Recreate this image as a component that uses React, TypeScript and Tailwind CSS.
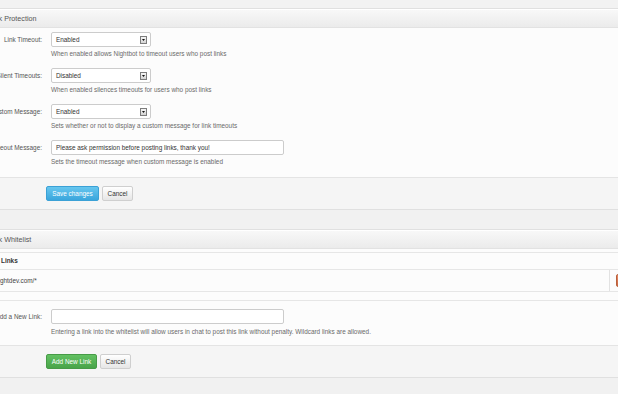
import type { ReactNode } from "react";

function Select({ value }: { value: string }) {
  return (
    <div className="flex h-[15px] w-[100px] items-center justify-between rounded-[2px] border border-[#cccccc] bg-white pl-[4px] pr-[3px] text-[#333]">
      <span>{value}</span>
      <span className="flex h-[8px] w-[7px] items-center justify-center border border-[#7d7d7d] bg-gradient-to-b from-[#f6f6f6] to-[#d4d4d4]">
        <svg width="3" height="2" viewBox="0 0 3 2">
          <path d="M0 0h3L1.5 2z" fill="#111" />
        </svg>
      </span>
    </div>
  );
}

function TextInput({ value = "" }: { value?: string }) {
  return (
    <div className="flex h-[15px] w-[233px] items-center rounded-[2px] border border-[#cccccc] bg-white px-[4px] text-[#333]">
      {value}
    </div>
  );
}

function Field({
  label,
  help,
  helpGap = "mt-[3px]",
  children,
}: {
  label: string;
  help: string;
  helpGap?: string;
  children: ReactNode;
}) {
  return (
    <div className="flex">
      <div className="flex h-[15px] w-[122px] shrink-0 items-center justify-end whitespace-nowrap text-[#555]">
        {label}
      </div>
      <div className="ml-[9px]">
        {children}
        <p className={`${helpGap} h-[8px] whitespace-nowrap leading-[8px] text-[#6a6a6a]`}>{help}</p>
      </div>
    </div>
  );
}

function PanelHeader({ title }: { title: string }) {
  return (
    <div className="flex h-[19px] items-center border-t border-b border-t-white border-b-[#e2e2e2] bg-gradient-to-b from-[#f8f8f8] to-[#ebebeb] pt-[1px] pl-[69px] text-[7.2px] text-[#555]">
      {title}
    </div>
  );
}

function Actions({ children }: { children: ReactNode }) {
  return (
    <div className="flex h-[32px] items-center border-t border-[#e4e4e4] bg-[#f5f5f5] pl-[126px]">
      {children}
    </div>
  );
}

function CancelButton() {
  return (
    <button className="ml-[3px] h-[15px] w-[31px] rounded-[2px] border border-[#cfcfcf] bg-gradient-to-b from-white to-[#e6e6e6] text-[#333]">
      Cancel
    </button>
  );
}

export default function App() {
  return (
    <div className="h-[394px] w-[618px] overflow-hidden bg-[#f1f1f1] font-['Liberation_Sans',Arial,sans-serif] text-[6.4px]">
      <div className="-ml-[80px] w-[698px]">
        <div className="h-[8px] bg-[#f2f2f2]" />

        {/* link protection */}
        <section className="border-t border-b border-[#e0e0e0] bg-[#fcfcfc]">
          <PanelHeader title="Link Protection" />
          <div className="flex flex-col gap-[10px] pt-[4px] pb-[11px]">
            <Field label="Link Timeout:" help="When enabled allows Nightbot to timeout users who post links">
              <Select value="Enabled" />
            </Field>
            <Field label="Silent Timeouts:" help="When enabled silences timeouts for users who post links">
              <Select value="Disabled" />
            </Field>
            <Field label="Custom Message:" help="Sets whether or not to display a custom message for link timeouts">
              <Select value="Enabled" />
            </Field>
            <Field label="Timeout Message:" help="Sets the timeout message when custom message is enabled">
              <TextInput value="Please ask permission before posting links, thank you!" />
            </Field>
          </div>
          <Actions>
            <button className="h-[15px] w-[53px] rounded-[2px] border border-[#3ba1d6] bg-gradient-to-b from-[#66c6ef] to-[#3aa6dc] text-white">
              Save changes
            </button>
            <CancelButton />
          </Actions>
        </section>

        {/* link whitelist */}
        <section className="mt-[19px] border-t border-b border-[#e0e0e0] bg-[#fcfcfc]">
          <PanelHeader title="Link Whitelist" />
          <div className="pt-[3px]">
            <div className="flex h-[18px] items-center border-t border-b border-[#e6e6e6] pl-[81px] font-bold text-[#333]">
              Links
            </div>
            <div className="flex h-[22px] border-b border-[#e6e6e6]">
              <div className="flex w-[690px] shrink-0 items-center border-r border-[#e2e2e2] pl-[75px] text-[#444]">
                nightdev.com/*
              </div>
              <div className="flex items-center pl-[6px]">
                <span className="h-[13px] w-[30px] shrink-0 rounded-[2px] border border-[#b8603c] bg-gradient-to-b from-[#e58a66] to-[#c8643e]" />
              </div>
            </div>
            <div className="h-[9px] border-b border-[#e6e6e6]" />
          </div>
          <div className="pt-[8px] pb-[9px]">
            <Field
              label="Add a New Link:"
              helpGap="mt-[4px]"
              help="Entering a link into the whitelist will allow users in chat to post this link without penalty. Wildcard links are allowed."
            >
              <TextInput />
            </Field>
          </div>
          <Actions>
            <button className="h-[15px] w-[51px] rounded-[2px] border border-[#479b47] bg-gradient-to-b from-[#62c162] to-[#49a449] text-white">
              Add New Link
            </button>
            <CancelButton />
          </Actions>
        </section>
      </div>
    </div>
  );
}
